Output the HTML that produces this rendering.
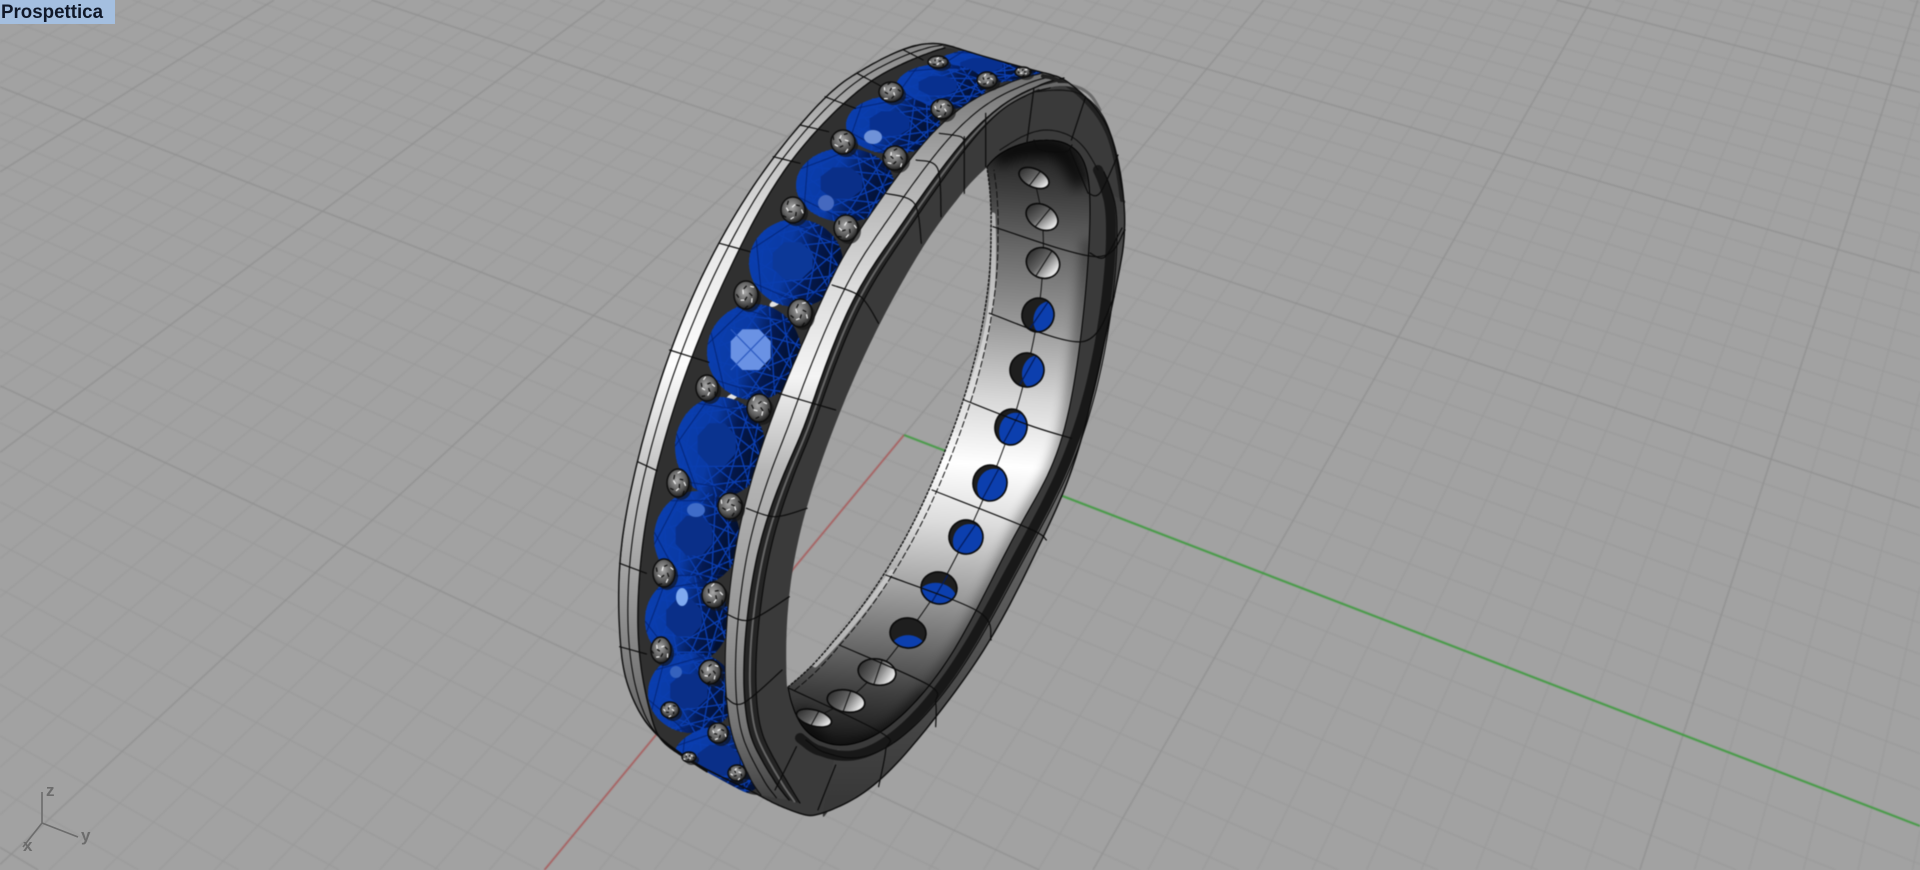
<!DOCTYPE html>
<html><head><meta charset="utf-8"><title>Prospettica</title>
<style>
html,body{margin:0;padding:0;background:#a2a2a2;width:1920px;height:870px;overflow:hidden}
svg{position:absolute;left:0;top:0;display:block;overflow:hidden}
#ring{filter:blur(.5px)}
#grid{filter:blur(.7px)}
</style></head><body>
<svg id="s" xmlns="http://www.w3.org/2000/svg" width="1920" height="870" viewBox="0 0 1920 870">
<defs>
<filter id="b6" x="-30%" y="-30%" width="160%" height="160%"><feGaussianBlur stdDeviation="6"/></filter>
<linearGradient id="gRail" gradientUnits="userSpaceOnUse" x1="0" y1="50" x2="0" y2="800">
<stop offset="0" stop-color="#8a8a8a"/><stop offset=".1" stop-color="#b5b5b5"/><stop offset=".25" stop-color="#e6e6e6"/><stop offset=".42" stop-color="#fdfdfd"/><stop offset=".55" stop-color="#c8c8c8"/><stop offset=".7" stop-color="#a0a0a0"/><stop offset=".85" stop-color="#747474"/><stop offset="1" stop-color="#3c3c3c"/>
</linearGradient>
<linearGradient id="gRail2" gradientUnits="userSpaceOnUse" x1="0" y1="70" x2="0" y2="800">
<stop offset="0" stop-color="#6e6e6e"/><stop offset=".12" stop-color="#a6a6a6"/><stop offset=".3" stop-color="#ddd"/><stop offset=".42" stop-color="#f4f4f4"/><stop offset=".55" stop-color="#b5b5b5"/><stop offset=".75" stop-color="#989898"/><stop offset=".9" stop-color="#747474"/><stop offset="1" stop-color="#404040"/>
</linearGradient>
<linearGradient id="gSurf" gradientUnits="userSpaceOnUse" x1="1040" y1="150" x2="1000" y2="748">
<stop offset="0" stop-color="#222"/><stop offset=".07" stop-color="#3e3e3e"/><stop offset=".17" stop-color="#6a6a6a"/><stop offset=".29" stop-color="#989898"/><stop offset=".42" stop-color="#d8d8d8"/><stop offset=".53" stop-color="#ffffff"/><stop offset=".63" stop-color="#dcdcdc"/><stop offset=".73" stop-color="#a8a8a8"/><stop offset=".84" stop-color="#6c6c6c"/><stop offset=".92" stop-color="#404040"/><stop offset="1" stop-color="#1c1c1c"/>
</linearGradient>
<linearGradient id="gFace" gradientUnits="userSpaceOnUse" x1="0" y1="180" x2="0" y2="800">
<stop offset="0" stop-color="#3c3c3c"/><stop offset=".25" stop-color="#565656"/><stop offset=".45" stop-color="#707070"/><stop offset=".7" stop-color="#585858"/><stop offset="1" stop-color="#383838"/>
</linearGradient>
<linearGradient id="gStone" x1="0" y1="0" x2="1" y2=".25">
<stop offset="0" stop-color="#0a3fb0"/><stop offset=".48" stop-color="#0a3aa4"/><stop offset=".72" stop-color="#051a52"/><stop offset="1" stop-color="#03102f"/>
</linearGradient>
<radialGradient id="gBall" cx=".45" cy=".4" r=".65">
<stop offset="0" stop-color="#a8a8a8"/><stop offset=".6" stop-color="#5a5a5a"/><stop offset="1" stop-color="#141414"/>
</radialGradient>
<linearGradient id="gHole" x1="0" y1="0" x2="1" y2=".3">
<stop offset="0" stop-color="#242424"/><stop offset=".55" stop-color="#626262"/><stop offset="1" stop-color="#e4e4e4"/>
</linearGradient>
<clipPath id="cChan"><path id="cChanP" d=""/></clipPath>
<clipPath id="cSurf"><path id="cSurfP" d=""/></clipPath>
</defs>
<rect width="1920" height="870" fill="#a2a2a2"/>
<g id="grid" fill="none"></g>
<g id="ring"></g>
<g stroke="#6c6c6c" stroke-width="1.6" fill="none">
<path d="M42 792L42 823M42 823L78 837M42 823L23 847"/>
</g>
<g font-family="'Liberation Sans',sans-serif" font-weight="bold" font-size="17" fill="#6c6c6c">
<text x="46" y="796">z</text><text x="81" y="841">y</text><text x="23" y="851">x</text>
</g>
<rect x="0" y="0" width="115" height="24" fill="#a4bfe0"/>
<text x="1" y="18" font-family="'Liberation Sans',sans-serif" font-weight="bold" font-size="19" fill="#101828" textLength="102" lengthAdjust="spacingAndGlyphs">Prospettica</text>
</svg>
<script>
(function(){
var NS='http://www.w3.org/2000/svg';
function el(p,t,a){var e=document.createElementNS(NS,t);for(var k in a)e.setAttribute(k,a[k]);p.appendChild(e);return e}
function cr(P,closed){
  var n=P.length,d='M'+P[0][0].toFixed(1)+' '+P[0][1].toFixed(1);
  var m=closed?n:n-1;
  for(var i=0;i<m;i++){
    var p0=closed?P[(i-1+n)%n]:P[Math.max(i-1,0)],p1=P[i],p2=closed?P[(i+1)%n]:P[i+1],p3=closed?P[(i+2)%n]:P[Math.min(i+2,n-1)];
    var c1=[p1[0]+(p2[0]-p0[0])/6,p1[1]+(p2[1]-p0[1])/6],c2=[p2[0]-(p3[0]-p1[0])/6,p2[1]-(p3[1]-p1[1])/6];
    d+='C'+c1[0].toFixed(1)+' '+c1[1].toFixed(1)+' '+c2[0].toFixed(1)+' '+c2[1].toFixed(1)+' '+p2[0].toFixed(1)+' '+p2[1].toFixed(1);
  }
  return d+(closed?'Z':'');
}
function dense(P,closed,m){
  var n=P.length,out=[],segs=closed?n:n-1;
  for(var i=0;i<segs;i++){
    var p0=closed?P[(i-1+n)%n]:P[Math.max(i-1,0)],p1=P[i],p2=closed?P[(i+1)%n]:P[i+1],p3=closed?P[(i+2)%n]:P[Math.min(i+2,n-1)];
    for(var j=0;j<m;j++){var t=j/m,t2=t*t,t3=t2*t;
      out.push([.5*(2*p1[0]+(p2[0]-p0[0])*t+(2*p0[0]-5*p1[0]+4*p2[0]-p3[0])*t2+(3*p1[0]-p0[0]-3*p2[0]+p3[0])*t3),
                .5*(2*p1[1]+(p2[1]-p0[1])*t+(2*p0[1]-5*p1[1]+4*p2[1]-p3[1])*t2+(3*p1[1]-p0[1]-3*p2[1]+p3[1])*t3)]);
    }
  }
  if(!closed)out.push(P[n-1].slice());
  return out;
}
function sm(P,closed,k){
  var D=dense(P,closed,6),n=D.length,R=[];
  for(var i=0;i<n;i++){
    var w=closed?k:Math.min(k,i,n-1-i),x=0,y=0;
    for(var j=-w;j<=w;j++){var q=closed?D[(i+j+n)%n]:D[i+j];x+=q[0];y+=q[1]}
    R.push([x/(2*w+1),y/(2*w+1)]);
  }
  return R;
}
function lerp(a,b,t){return a.map(function(p,i){return [p[0]+(b[i][0]-p[0])*t,p[1]+(b[i][1]-p[1])*t]})}
function z2(a){return a.map(function(p){return [600+p[0]/2.8,30+p[1]/3]})}
function z3(a){return a.map(function(p){return [600+p[0]/2.8,440+p[1]/3]})}

/* ---------- perspective grid ---------- */
var O=[904,435],Vr=[2330,-1290],Vg=[-3682,-1330],A=-0.1347,B=-0.0726;
function H(u,v){var w=1+u*A+v*B;return [(O[0]+u*A*Vr[0]+v*B*Vg[0])/w,(O[1]+u*A*Vr[1]+v*B*Vg[1])/w]}
var g=document.getElementById('grid');
function ln(p,q,c,w){
  var t0=0,t1=1,dx=q[0]-p[0],dy=q[1]-p[1],P=[-dx,dx,-dy,dy],Q=[p[0],1920-p[0],p[1],870-p[1]];
  for(var i=0;i<4;i++){
    if(P[i]===0){if(Q[i]<0)return}
    else{var r=Q[i]/P[i];if(P[i]<0){if(r>t1)return;if(r>t0)t0=r}else{if(r<t0)return;if(r<t1)t1=r}}
  }
  el(g,'line',{x1:(p[0]+t0*dx).toFixed(1),y1:(p[1]+t0*dy).toFixed(1),x2:(p[0]+t1*dx).toFixed(1),y2:(p[1]+t1*dy).toFixed(1),stroke:c,'stroke-width':w});
}
var i;
for(i=-100;i<=22;i++){if(i%10!==0)ln(H(i/10,-14),H(i/10,6),'#999999',1)}
for(i=-140;i<=60;i++){if(i%10!==0)ln(H(-10,i/10),H(2.2,i/10),'#999999',1)}
for(i=-10;i<=2;i++)ln(H(i,-14),H(i,6),'#8f8f8f',1.2);
for(i=-14;i<=6;i++)ln(H(-10,i),H(2.2,i),'#8f8f8f',1.2);
ln(H(0,0),H(2.2,0),'#a85858',1.6);
ln(H(0,0),H(0,5),'#3f9a3f',2);

/* ---------- ring geometry ---------- */
var r=document.getElementById('ring');
var SIL=sm([[939,43],[904,48],[857,73],[825,97],[771,160],[718,243],[671,347],[636,465],[619,560],[620,640],[627,685],[648,727],[679,752],[707,770],[750,790],[771,802],[804,815],[823,813],[875,787],[936,717],[993,637],[1043,537],[1080,450],[1112,305],[1124,245],[1124,200],[1116,150],[1100,112],[1066,80],[1043,73],[968,52]],true,3);
var HL=sm([[987,167],[957,197],[921,247],[879,323],[829,430],[796,540],[786,607],[786,680],[788,687]],false,6);
var HR=sm([[788,687],[832,647],[886,577],[932,490],[964,400],[989,313],[993,227],[987,167]],false,6);
var HOLE=HL.concat(HR);
var LA=sm([[939,43],[904,48],[857,73],[825,97],[771,160],[718,243],[671,347],[636,465],[619,560],[620,640],[627,685],[648,727],[679,752],[707,770]],false,4);
var LB=sm([[945,48],[921,56],[882,74],[850,98],[789,160],[743,243],[695,347],[657,465],[640,563],[638,653],[650,707],[657,737],[676,752],[707,772]],false,4);
var C=sm([[1043,73],[993,87],[957,110],[921,143],[886,193],[852,240],[829,283],[800,350],[779,397],[761,450],[743,507],[725,607],[725,707],[734,740],[746,773],[761,795]],false,5);
var D=sm([[1064,78],[1029,88],[989,113],[951,155],[914,207],[882,253],[857,290],[832,347],[811,407],[796,450],[768,507],[745,607],[743,707],[752,740],[768,773],[789,800]],false,5);
var E=sm([[1050,88],[1018,97],[989,120],[958,158],[920,212],[888,260],[864,297],[839,353],[818,413],[805,450],[780,507],[757,607],[755,707],[764,740],[782,773],[800,803]],false,5);
function strip(a,b){return cr(a.concat(b.slice().reverse()),false)+'Z'}

/* body */
el(r,'path',{d:cr(SIL,true)+cr(HOLE,true),'fill-rule':'evenodd',fill:'#3a3a3a'});

/* right outer face */
var STRIPE=sm([[1098,170],[1108,195],[1112,230],[1104,330],[1074,450],[1030,533],[978,632],[938,692],[888,745],[836,760],[800,738]],false,4);
var RO=sm([[1124,200],[1124,245],[1112,305],[1080,450],[1043,537],[993,637],[936,717],[875,787],[823,813]],false,4);
el(r,'path',{d:cr(RO.concat(sm([[836,753],[888,745],[938,692],[978,632],[1030,533],[1074,450],[1104,330],[1112,230],[1108,195]],false,4)),true),fill:'url(#gFace)'});

/* left rail */
el(r,'path',{d:strip(LA,LB),fill:'url(#gRail)'});

/* channel */
var chan=LB.concat([[745,792]]).concat(C.slice().reverse()).concat([[968,52]]);
var chanD=cr(chan,true);
document.getElementById('cChanP').setAttribute('d',chanD);
el(r,'path',{d:chanD,fill:'#303030'});

[[775,303,6,3,-30],[732,397,6,3,-25],[707,497,5,3,-20]].forEach(function(q){
  el(r,'ellipse',{cx:q[0],cy:q[1],rx:q[2],ry:q[3],fill:'#e4e4e4',transform:'rotate('+q[4]+' '+q[0]+' '+q[1]+')'});
});

/* stones */
var stones=r.appendChild(document.createElementNS(NS,'g'));stones.setAttribute('clip-path','url(#cChan)');
var ST=[[1012,70,34,11],[985,66,50,17],[941,87,45,23],[893,125,47,29],[845,185,49,37],[796,263,47,44],[754,352,47,48],[720,447,45,50],[697,538,43,47],[687,620,42,44],[692,693,44,40],[722,762,50,36]];
var tableC=['#08308f','#08308f','#08308f','#08308f','#0a2f88','#0c3898','#6a92e4','#0a338f','#0a2f88','#0a2f88','#0a2f88','#0a2f88'];
ST.forEach(function(s,idx){
  var x=s[0],y=s[1],a=s[2],b=s[3];
  el(stones,'ellipse',{cx:x,cy:y,rx:a,ry:b,fill:'url(#gStone)'});
  var k,n=20;
  for(k=0;k<n;k++){
    var t=k*2*Math.PI/n+idx*.37,t2=t+(k%2?2.35:1.5);
    el(stones,'line',{x1:(x+a*Math.cos(t)).toFixed(1),y1:(y+b*Math.sin(t)).toFixed(1),x2:(x+a*Math.cos(t2)).toFixed(1),y2:(y+b*Math.sin(t2)).toFixed(1),stroke:'#0b3eaf','stroke-width':1.4});
  }
  for(k=0;k<6;k++){
    var t3=k*Math.PI/3+idx*.9,t4=t3+1.3;
    el(stones,'line',{x1:(x+a*Math.cos(t3)).toFixed(1),y1:(y+b*Math.sin(t3)).toFixed(1),x2:(x+a*Math.cos(t4)).toFixed(1),y2:(y+b*Math.sin(t4)).toFixed(1),stroke:'#04206a','stroke-width':1.1,opacity:.7});
  }
  var oct=[],ta=a*.46,tb=b*.46,cx=x-a*.07,cy=y-b*.05;
  for(k=0;k<8;k++){var an=(k+.5)*Math.PI/4;oct.push((cx+ta*Math.cos(an)).toFixed(1)+','+(cy+tb*Math.sin(an)).toFixed(1))}
  el(stones,'polygon',{points:oct.join(' '),fill:tableC[idx]});
  if(idx===6){
    el(stones,'path',{d:'M'+(cx-ta*.92)+' '+(cy-tb*.92)+'L'+(cx+ta*.92)+' '+(cy+tb*.92)+'M'+(cx+ta*.92)+' '+(cy-tb*.92)+'L'+(cx-ta*.92)+' '+(cy+tb*.92),stroke:'#2a58c0','stroke-width':1.2,fill:'none'});
  }
});
[[873,137,9,7,'#6f92d8'],[826,203,8,8,'#4569bf'],[696,510,9,7,'#3f6cc8'],[682,597,6,9,'#7faaf0'],[676,672,6,6,'#3562bd']].forEach(function(h){
  el(stones,'ellipse',{cx:h[0],cy:h[1],rx:h[2],ry:h[3],fill:h[4]});
});

function stroke(P,w,c,extra){var a={d:cr(P,false),fill:'none',stroke:c||'#0c0c0c','stroke-width':w||1.2,'stroke-linejoin':'round','stroke-linecap':'round'};if(extra)for(var k in extra)a[k]=extra[k];return el(r,'path',a)}
stroke(lerp(LA,LB,.45),1.1);
stroke(lerp(LA,LB,.97),1.4);

/* right rail + stripe */
el(r,'path',{d:strip(C,D),fill:'url(#gRail2)'});
el(r,'path',{d:strip(D,E),fill:'#242424'});
stroke(lerp(C,D,.55),1.1);
stroke(C,1.1,'#111');
stroke(D,1.3,'#0a0a0a');
stroke(E,1.1,'#0a0a0a');
stroke(lerp(D,E,.5),2,'#757575',{opacity:.8});

/* inner surface */
var R1=sm([[987,167],[1000,153],[1027,142],[1053,140],[1073,147],[1088,170],[1090,230],[1082,330],[1061,450],[1018,527],[968,627],[929,687],[882,733],[836,747],[800,727],[788,687]],false,3);
var SURF=HR.slice().reverse().concat(R1.slice().reverse());
var sd=cr(SURF,true);
document.getElementById('cSurfP').setAttribute('d',sd);
el(r,'path',{d:sd,fill:'url(#gSurf)'});
var sh=el(r,'g',{'clip-path':'url(#cSurf)'});
[[[[995,158],[1029,148],[1061,152],[1082,185]],18,.7],
 [[[800,712],[815,740],[840,752],[885,737],[930,692]],18,.6],
 [[[1088,240],[1080,335],[1060,450],[1018,530],[968,630],[930,690]],10,.5]].forEach(function(s){
  el(sh,'path',{d:cr(s[0],false),fill:'none',stroke:'#000','stroke-width':s[1],opacity:s[2],filter:'url(#b6)'});
});
stroke(sm([[993,215],[993,300],[976,375],[957,430]],false,3),5,'#e4e4e4',{opacity:.65});
stroke(sm([[892,572],[850,628],[815,665]],false,3),5,'#d4d4d4',{opacity:.7});
stroke(STRIPE,10,'#181818');
stroke(R1,1,'#000');
stroke(STRIPE.map(function(p){return [p[0]+6,p[1]+2]}),1.1,'#0a0a0a');
stroke(HR,1.4,'#111',{'stroke-dasharray':'2 2.2'});
stroke(HR.map(function(p){return [p[0]+7,p[1]+3]}),1,'#111',{'stroke-dasharray':'6 3'});
stroke(sm([[1043,76],[1066,83],[1098,114],[1114,150],[1122,200]],false,3),4,'#202020');
stroke(sm([[1040,88],[1064,84],[1088,92],[1100,110]],false,2),3,'#6a6a6a');
stroke(sm([[1034,92],[1066,90],[1090,100],[1110,130],[1122,190]],false,2),1.1,'#111');
stroke(sm([[1000,150],[1027,134],[1053,130],[1080,142],[1098,170]],false,2),1.1,'#111');

var HS=[[1034,178],[1042,217],[1043,263],[1038,315],[1027,370],[1011,427],[990,483],[966,537],[939,588],[908,633],[877,672],[846,701],[814,718]];
stroke(HS,1,'#111');

var holeDef=[
 [1034,178,16,9,25,'g'],[1042,217,17,12,30,'g'],[1043,263,17,15,25,'g'],
 [1038,315,16,17,15,'br'],[1027,370,17,17,10,'br'],[1011,427,16,18,10,'bc'],[990,483,17,18,10,'bc'],[966,537,17,17,15,'bc'],
 [939,588,18,16,10,'bl'],[908,633,18,15,5,'bs'],
 [877,672,19,13,10,'g'],[846,701,19,11,10,'g'],[814,718,18,8,15,'g']];
holeDef.forEach(function(h,i){
  var x=h[0],y=h[1],a=h[2],b=h[3],rot=h[4],k=h[5];
  var G=el(r,'g',{transform:'rotate('+rot+' '+x+' '+y+')'});
  var id='hc'+i;
  var defs=el(G,'clipPath',{id:id});el(defs,'ellipse',{cx:x,cy:y,rx:a,ry:b});
  el(G,'ellipse',{cx:x,cy:y,rx:a,ry:b,fill:k==='g'?'url(#gHole)':'#1e1e1e'});
  var cg=el(G,'g',{'clip-path':'url(#'+id+')'});
  if(k==='br')el(cg,'ellipse',{cx:x+9,cy:y+1,rx:a*.8,ry:b,fill:'#0c3fae'});
  if(k==='bc')el(cg,'ellipse',{cx:x+4,cy:y+3,rx:a*.95,ry:b,fill:'#0c3fae'});
  if(k==='bl')el(cg,'ellipse',{cx:x,cy:y+11,rx:a*1.1,ry:b,fill:'#0c3fae'});
  if(k==='bs')el(cg,'ellipse',{cx:x+2,cy:y+17,rx:a,ry:b,fill:'#0c3fae'});
  if(k==='br'||k==='bc'||k==='bl')el(cg,'line',{x1:x+7,y1:y-b,x2:x-5,y2:y+b,stroke:'#041c5c','stroke-width':1.2});
  if(k==='g')el(cg,'line',{x1:x+3,y1:y-b,x2:x-1,y2:y+b,stroke:'#111','stroke-width':1});
  el(G,'ellipse',{cx:x,cy:y,rx:a,ry:b,fill:'none',stroke:'#0a0a0a','stroke-width':1.6});
});

[[[630,200],[715,235]],[[720,130],[790,170]],[[850,60],[905,90]],[[560,285],[640,305]],[[485,380],[560,400]],[[335,640],[420,665]],[[195,960],[305,997]],
 [[1020,320],[1020,490]],[[950,310],[1010,320],[1020,340]],[[1080,250],[1080,410]],[[1215,175],[1195,340]],[[1360,200],[1320,330]],
 [[1470,600],[1390,680],[1100,590]],[[1440,800],[1350,935],[1090,850]],[[1320,1225],[1200,1185],[1020,1110]],
 [[800,490],[880,520],[900,640]],[[650,765],[730,800],[780,880]],[[500,1090],[660,1140]],[[885,390],[945,415],[955,560]]
].forEach(function(p){stroke(z2(p),1.2)});
[[[1088,193],[1100,193],[1118,155]],[[1088,193],[1070,150]],[[1034,140],[1040,150],[1065,152],[1072,145]],[[1090,253],[1105,257],[1122,228]]].forEach(function(p){stroke(p,1.2)});
[[[105,65],[160,92]],[[55,370],[130,400]],[[55,620],[130,642]],[[410,205],[490,230],[580,205]],[[350,520],[420,540],[530,470]],[[350,770],[400,790],[510,690]],
 [[530,745],[790,880],[800,930],[780,1040]],[[670,615],[920,735],[940,790],[940,860]],[[800,405],[1060,515],[1095,600]],[[930,150],[1200,265],[1250,300]],
 [[550,920],[490,1050]],[[660,975],[610,1110]]
].forEach(function(p){stroke(z3(p),1.2)});

el(r,'path',{d:cr(SIL,true),fill:'none',stroke:'#0c0c0c','stroke-width':1.4});

var PR=[[707,388,11,13],[746,295,12,14],[793,210,12,13],[843,142,12,12],[891,92,12,10],[938,62,10,6],
 [759,408,12,14],[800,313,12,14],[846,228,12,13],[895,158,12,12],[942,109,11,10],[987,80,10,8],[1023,72,8,5],
 [678,483,11,14],[664,573,11,14],[661,650,10,13],[670,710,9,8],[689,757,7,5],
 [730,506,12,13],[714,595,12,13],[710,672,11,12],[718,733,10,10],[737,773,9,8]];
var pg=el(r,'g',{});
PR.forEach(function(p,i){
  var x=p[0],y=p[1],a=p[2],b=p[3];
  el(pg,'ellipse',{cx:x+3,cy:y+3,rx:a,ry:b,fill:'#141414',opacity:.65});
  el(pg,'ellipse',{cx:x,cy:y,rx:a,ry:b,fill:'url(#gBall)',stroke:'#0c0c0c','stroke-width':1.4});
  for(var k=0;k<9;k++){
    var t=k*2.4+i,rr=.15+.08*k;
    var px=x+a*rr*Math.cos(t),py=y+b*rr*Math.sin(t);
    el(pg,'line',{x1:px.toFixed(1),y1:py.toFixed(1),x2:(px+a*.32*Math.cos(t+1.2)).toFixed(1),y2:(py+b*.32*Math.sin(t+1.2)).toFixed(1),stroke:k%2?'#f6f6f6':'#0c0c0c','stroke-width':1.2});
  }
});
})();
</script>
</body></html>
